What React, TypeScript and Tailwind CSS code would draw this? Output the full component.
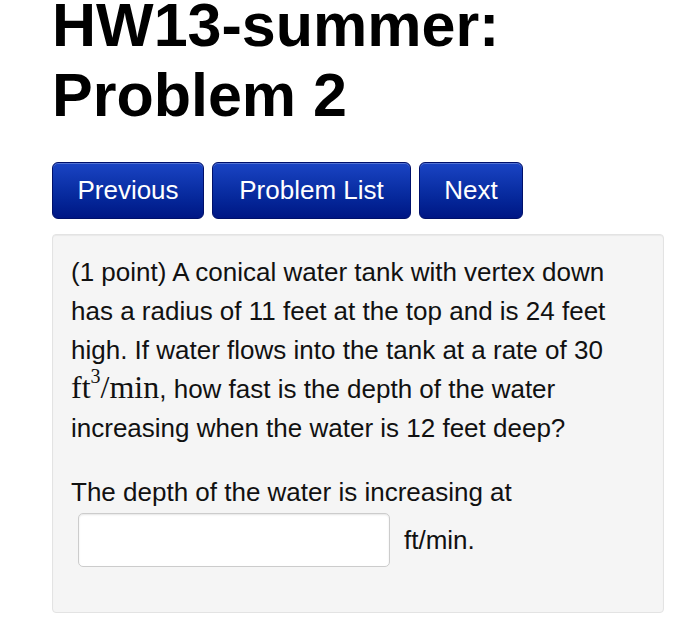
export default function App() {
  const btn =
    "h-[57px] rounded-[6px] border border-[#00106a] bg-gradient-to-b from-[#1a44c4] to-[#001684] text-white text-[26px] flex items-center justify-center shadow-[inset_0_1px_0_rgba(255,255,255,0.25)]";
  const serif = { fontFamily: '"Liberation Serif", "Times New Roman", serif' };
  return (
    <div className="min-h-[625px] w-[700px] bg-white overflow-hidden" style={{ fontFamily: '"Liberation Sans", Arial, sans-serif' }}>
      <div className="pl-[52px] pr-[36px]">
        <h1 className="mt-[-10px] text-[61px] leading-[70px] font-bold text-black">
          HW13-summer:
          <br />
          Problem 2
        </h1>
        <div className="mt-[32px] flex gap-[8px]">
          <button className={btn + " w-[152px]"}>Previous</button>
          <button className={btn + " w-[199px]"}>Problem List</button>
          <button className={btn + " w-[104px]"}>Next</button>
        </div>
        <div className="mt-[15px] w-[612px] rounded-[4px] border border-[#e3e3e3] bg-[#f5f5f5] px-[18px] pt-[18px] pb-[45px] text-[26px] leading-[39px] text-[#111] shadow-[inset_0_1px_1px_rgba(0,0,0,0.05)]">
          <p>
            (1 point) A conical water tank with vertex down
            <br />
            has a radius of 11 feet at the top and is 24 feet
            <br />
            high. If water flows into the tank at a rate of 30
            <br />
            <span className="text-[32px] leading-[0]" style={serif}>
              ft<sup className="text-[20px] top-[-0.75em]">3</sup>/min
            </span>
            , how fast is the depth of the water
            <br />
            increasing when the water is 12 feet deep?
          </p>
          <p className="mt-[25px]">The depth of the water is increasing at</p>
          <div className="mt-[1px] flex items-center">
            <div className="ml-[7px] h-[54px] w-[312px] rounded-[5px] border border-[#cccccc] bg-white shadow-[inset_0_1px_2px_rgba(0,0,0,0.1)]" />
            <span className="ml-[14px]">ft/min.</span>
          </div>
        </div>
      </div>
    </div>
  );
}
